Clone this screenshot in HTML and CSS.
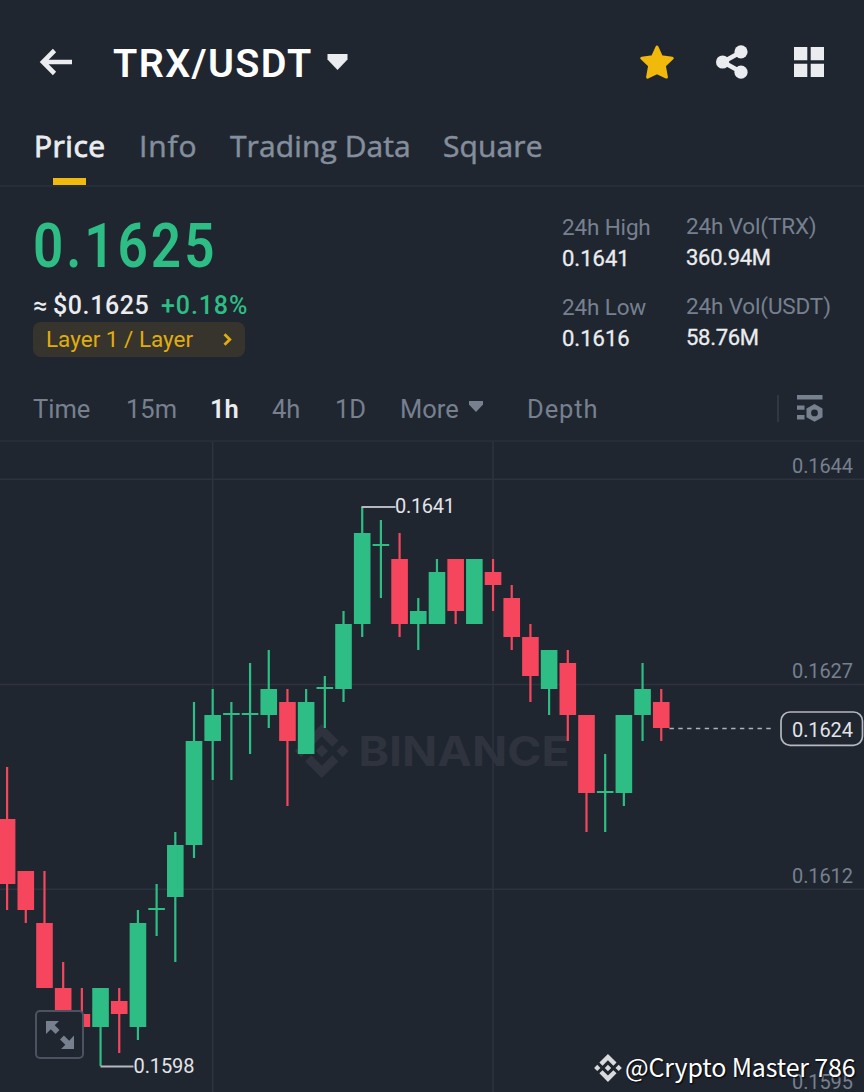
FILE: index.html
```html
<!DOCTYPE html>
<html>
<head>
<meta charset="UTF-8">
<title>TRX/USDT</title>
<link rel="stylesheet" href="styles.css">
<script src="chart.js" defer></script>
</head>
<body>
<div class="app">
	<!-- header -->
	<header class="header">
		<svg class="back" width="34" height="28" viewBox="0 0 34 28"><path d="M33 14H4M15.5 2.500L4 14l11.500 11.500" fill="none" stroke="#eaecef" stroke-width="4.600"/></svg>
		<h1 class="pair">TRX/USDT</h1>
		<svg class="pair-caret" width="21" height="16" viewBox="0 0 21 16"><path d="M.5 0h20v5.500L10.500 16 .5 5.500z" fill="#eaecef"/></svg>
		<div class="actions">
			<svg width="34" height="34" viewBox="0 0 34 34"><path d="M17 2l4.300 9.700 10.900 1.500-7.900 7.400 2.100 11.500-9.400-4.400-9.400 4.400 2.100-11.500-7.900-7.400 10.900-1.500z" fill="#f0b90b" stroke="#f0b90b" stroke-width="3" stroke-linejoin="round"/></svg>
			<svg width="32" height="34" viewBox="0 0 32 34"><path d="M25 7L7 17l18 10" fill="none" stroke="#eaecef" stroke-width="4.600"/><g fill="#eaecef"><circle cx="25" cy="6.800" r="6.600"/><circle cx="6.600" cy="17" r="6.600"/><circle cx="25" cy="27.200" r="6.600"/></g></svg>
			<svg width="30" height="30" viewBox="0 0 30 30"><path d="M0 0h13.300v13.300H0zM16.700 0H30v13.300H16.700zM0 16.700h13.300V30H0zM16.700 16.700H30V30H16.700z" fill="#eaecef"/></svg>
		</div>
	</header>

	<!-- tabs -->
	<nav class="tabs">
		<a class="tab tab-price active">Price</a>
		<a class="tab tab-info">Info</a>
		<a class="tab tab-data">Trading Data</a>
		<a class="tab tab-square">Square</a>
	</nav>

	<!-- quote -->
	<section class="quote">
		<div class="quote-main">
			<div class="last">0.1625</div>
			<div class="fiat"><span class="approx">≈</span><span class="usd">$0.1625</span><span class="change">+0.18%</span></div>
			<div class="tag"><span>Layer 1 / Layer</span><svg width="9" height="13" viewBox="0 0 9 13"><path d="M1.500 1.300L6.800 6.500 1.500 11.700" fill="none" stroke="#e0ad10" stroke-width="2.800"/></svg></div>
		</div>
		<div class="stats stats-price">
			<div class="label">24h High</div>
			<div class="value">0.1641</div>
			<div class="label">24h Low</div>
			<div class="value">0.1616</div>
		</div>
		<div class="stats stats-vol">
			<div class="label">24h Vol(TRX)</div>
			<div class="value">360.94M</div>
			<div class="label">24h Vol(USDT)</div>
			<div class="value">58.76M</div>
		</div>
	</section>

	<!-- intervals -->
	<div class="intervals">
		<span>Time</span>
		<span>15m</span>
		<span class="on">1h</span>
		<span>4h</span>
		<span>1D</span>
		<span class="more">More<svg width="14" height="11" viewBox="0 0 14 11"><path d="M0 0h14v3.500L7 11 0 3.500z" fill="#76808f"/></svg></span>
		<span class="depth">Depth</span>
		<i class="divider"></i>
		<svg width="26" height="28" viewBox="0 0 26 28"><g fill="#76808f"><path d="M0 0h25.500v4.500H0zM0 10.500h7.500v4.200H0zM0 20h7.500v4.400H0z"/><path fill-rule="evenodd" d="M17.500 9l8 4.500v8.800l-8 4.500-8-4.500v-8.800zM17.500 14.500a3.400 3.400 0 1 0 0 6.800 3.400 3.400 0 0 0 0-6.800z"/></g></svg>
	</div>

	<!-- chart -->
	<div class="chart">
		<svg class="plot" width="864" height="650" viewBox="0 442 864 650">
			<defs>
				<g id="logo">
					<path d="M38.200 53.200L62.800 28.600l24.600 24.600 14.300-14.300L62.800 0 23.900 38.900z"/>
					<path d="M0 63.300L14.300 49l14.300 14.300-14.300 14.300z"/>
					<path d="M38.200 73.400L62.800 98l24.600-24.600 14.300 14.300-38.900 38.900-38.900-38.900z"/>
					<path d="M97 63.300L111.300 49l14.300 14.300-14.300 14.300z"/>
					<path d="M77.300 63.300L62.800 48.800 48.300 63.300l14.500 14.500z"/>
				</g>
			</defs>
			<g class="grid">
				<path d="M0 479.300h864M0 684.500h864M0 889.300h864M212.700 442v650M493 442v650"/>
			</g>
			<g class="brand">
				<use href="#logo" transform="translate(295 724) scale(.427)"/>
				<text x="358.500" y="766" textLength="211" lengthAdjust="spacingAndGlyphs">BINANCE</text>
			</g>
			<g id="candles"></g>
			<g class="marks">
				<path d="M361.500 507h34M100.500 1066.500h33"/>
				<text x="395" y="512.500" textLength="60">0.1641</text>
				<text x="133.500" y="1072.500" textLength="61">0.1598</text>
			</g>
			<g class="axis">
				<text x="792" y="472.500" textLength="61">0.1644</text>
				<text x="792" y="678" textLength="61">0.1627</text>
				<text x="792" y="883" textLength="61">0.1612</text>
				<text x="792" y="1088.500" textLength="61">0.1595</text>
			</g>
			<g class="current">
				<path d="M669.500 728.500h102" stroke-dasharray="4.400 4.400"/>
				<rect x="781" y="712" width="81.500" height="33.300" rx="9"/>
				<text x="792" y="736.500" textLength="61">0.1624</text>
			</g>
		</svg>
		<button type="button" class="expand">
			<svg width="28" height="28" viewBox="0 0 28 28"><path d="M0 0h13L8.700 4.300l4.800 4.800-3.900 3.900L4.800 8.200 0 13zM28 28H15l4.300-4.300-5.300-5.300 3.900-3.900 5.300 5.300L28 14.500z" fill="#76808f"/></svg>
		</button>
		<div class="credit">
			<svg width="28" height="28" viewBox="0 0 126 127"><use href="#logo" fill="#d9dadc"/></svg>
			<span>@Crypto Master 786</span>
		</div>
	</div>
</div>
</body>
</html>
```
FILE: styles.css
```css
body{
	margin: 0;
	background: #202630;
	color: #eaecef;
	font-family: Roboto, "Liberation Sans", sans-serif;
}
.app{
	width: 864px;
	height: 1092px;
	overflow: hidden;
}

/* header */
.header{
	display: flex;
	align-items: center;
	height: 124px;
	padding: 0 40px 0 39px;
	box-sizing: border-box;
}
.pair{
	margin: 4px 0 0 40px;
	width: 214px;
	font-size: 39.5px;
	font-weight: 600;
	letter-spacing: 1.4px;
	line-height: 48px;
	color: #fff;
	white-space: nowrap;
}
.actions{
	display: flex;
	align-items: center;
	margin-left: auto;
}
.actions svg + svg{
	margin-left: 42px;
}
.actions svg:last-child{
	margin-left: 46px;
}

/* tabs */
.tabs{
	display: flex;
	height: 61px;
	padding-left: 34px;
	border-bottom: 2px solid #272d38;
	font-family: "Open Sans", sans-serif;
	font-size: 30px;
	line-height: 43px;
	color: #848e9c;
	-webkit-text-stroke: 0.5px;
	letter-spacing: 0.1px;
	white-space: nowrap;
}
.tab{
	position: relative;
}
.tab-price{ width: 105px; }
.tab-info{
	width: 91px;
	letter-spacing: 0.9px;
}
.tab-data{ width: 213px; }
.active{
	color: #eaecef;
	letter-spacing: 0.5px;
	-webkit-text-stroke: 0.9px;
}
.active::after{
	content: "";
	position: absolute;
	left: 19px;
	top: 54px;
	width: 33px;
	height: 7px;
	background: #f0b90b;
}

/* quote */
.quote{
	display: flex;
	height: 190px;
}
.quote-main{
	width: 562px;
	padding: 25px 0 0 33px;
	box-sizing: border-box;
}
.last{
	width: 240px;
	height: 68px;
	font-size: 61px;
	line-height: 68px;
	font-weight: 600;
	letter-spacing: 3.4px;
	color: #2ebd85;
	transform: scaleX(0.87);
	transform-origin: 0 0;
}
.fiat{
	display: flex;
	height: 41px;
	font-size: 25px;
	line-height: 51px;
	font-weight: 500;
	letter-spacing: 0.6px;
}
.approx{ width: 20px; }
.usd{ width: 108px; }
.change{
	color: #2ebd85;
	letter-spacing: 0.9px;
}
.tag{
	display: flex;
	align-items: center;
	justify-content: space-between;
	width: 212px;
	height: 35px;
	margin-top: 1px;
	padding: 0 13px;
	box-sizing: border-box;
	border-radius: 8px;
	background: #36342c;
	color: #e0ad10;
	font-size: 22.5px;
	line-height: 35px;
}
.stats{
	font-size: 22.5px;
	line-height: 31px;
}
.stats-price{
	width: 124px;
	padding-top: 25px;
}
.stats-vol{
	padding-top: 24px;
}
.label{
	color: #76808f;
	letter-spacing: -0.15px;
	white-space: nowrap;
}
.value{
	margin-bottom: 18px;
	font-size: 22px;
	-webkit-text-stroke: 0.3px;
}
.stats-vol .value{
	letter-spacing: -0.3px;
}

/* intervals */
.intervals{
	display: grid;
	grid-template-columns: 93px 84px 62px 63px 65px 127px 250px 20px 26px;
	align-items: center;
	height: 63px;
	padding-left: 33px;
	border-bottom: 2px solid #272d38;
	font-size: 25.5px;
	color: #76808f;
}
.intervals .on{
	color: #eaecef;
	font-weight: 600;
}
.intervals .depth{
	letter-spacing: 0.9px;
}
.more{
	display: flex;
	align-items: center;
}
.more svg{
	margin: -5px 0 0 10px;
}
.divider{
	width: 2px;
	height: 27px;
	background: #303642;
}

/* chart */
.chart{
	position: relative;
	height: 650px;
}
.plot{
	display: block;
}
.plot text{
	font-size: 20px;
}
.grid{
	stroke: #2d323e;
	stroke-width: 1.6;
}
.brand{
	fill: #2f333e;
}
.plot .brand text{
	font-family: Inter, sans-serif;
	font-size: 41.5px;
	font-weight: 700;
}
.up{
	fill: #2ebd85;
}
.down{
	fill: #f6465d;
}
.marks, .current{
	fill: #e2e4e8;
}
.marks path{
	stroke: #b5b8be;
	stroke-width: 1.8;
}
.axis{
	fill: #76808f;
}
.current path{
	stroke: #aeb1b7;
	stroke-width: 1.6;
}
.current rect{
	fill: #202630;
	stroke: #b5b8be;
	stroke-width: 1.7;
}
.expand{
	position: absolute;
	left: 35px;
	top: 568px;
	display: flex;
	align-items: center;
	justify-content: center;
	width: 49px;
	height: 49px;
	padding: 0;
	border: 2px solid #4b5361;
	border-radius: 5px;
	background: #202630;
}
.credit{
	position: absolute;
	left: 594px;
	top: 608px;
	display: flex;
	align-items: center;
	height: 36px;
	font-family: "Noto Sans CJK SC", sans-serif;
	font-size: 25px;
	line-height: 36px;
	letter-spacing: -0.15px;
	color: #fff;
	text-shadow: 1px 1px 2px #000;
	white-space: nowrap;
}
.credit span{
	margin: -4px 0 0 3px;
}
```
FILE: chart.js
```js
// open, close, high, low (x 0.0001)
var data=[
	[1617,1612,1621,1610],
	[1613,1610,1613,1609],
	[1609,1604,1613,1604],
	[1604,1602,1606,1602],
	[1602,1601,1604,1601],
	[1601,1604,1604,1598],
	[1603,1602,1604,1599],
	[1601,1609,1610,1600],
	[1610,1610,1612,1608],
	[1611,1615,1616,1606],
	[1615,1623,1626,1614],
	[1623,1625,1627,1620],
	[1625,1625,1626,1620],
	[1625,1625,1629,1622],
	[1625,1627,1630,1624],
	[1626,1623,1627,1618],
	[1622,1626,1627,1622],
	[1627,1627,1628,1624],
	[1627,1632,1633,1626],
	[1632,1639,1641,1631],
	[1638,1638,1640,1634],
	[1637,1632,1639,1631],
	[1632,1633,1634,1630],
	[1632,1636,1637,1632],
	[1637,1633,1637,1632],
	[1632,1637,1637,1632],
	[1636,1635,1637,1633],
	[1634,1631,1635,1630],
	[1631,1628,1632,1626],
	[1627,1630,1630,1625],
	[1629,1625,1630,1623],
	[1625,1619,1625,1616],
	[1619,1619,1622,1616],
	[1619,1625,1625,1618],
	[1625,1627,1629,1623],
	[1626,1624,1627,1623]
];
var step=18.69;

function getY(p){
	return 507+(1641-p)*13;
}
function addRect(parent,x,y,w,h){
	var r=document.createElementNS("http://www.w3.org/2000/svg","rect");
	r.setAttribute("x",x);
	r.setAttribute("y",y);
	r.setAttribute("width",w);
	r.setAttribute("height",h);
	parent.appendChild(r);
}

var box=document.getElementById("candles");
for(var i=0;i<data.length;i++){
	var d=data[i];
	var x=7.1+i*step;
	var g=document.createElementNS("http://www.w3.org/2000/svg","g");
	g.setAttribute("class",d[1]>=d[0]?"up":"down");
	// wick
	addRect(g,x-1.1,getY(d[2]),2.2,getY(d[3])-getY(d[2]));
	// body, a flat line when open equals close
	var bodyY=getY(Math.max(d[0],d[1]));
	var bodyH=Math.abs(d[0]-d[1])*13;
	if(bodyH==0){
		// flat line sits just inside its price level
		bodyY-=2;
		bodyH=2;
	}
	addRect(g,x-8.3,bodyY,16.6,bodyH);
	box.appendChild(g);
}
```
